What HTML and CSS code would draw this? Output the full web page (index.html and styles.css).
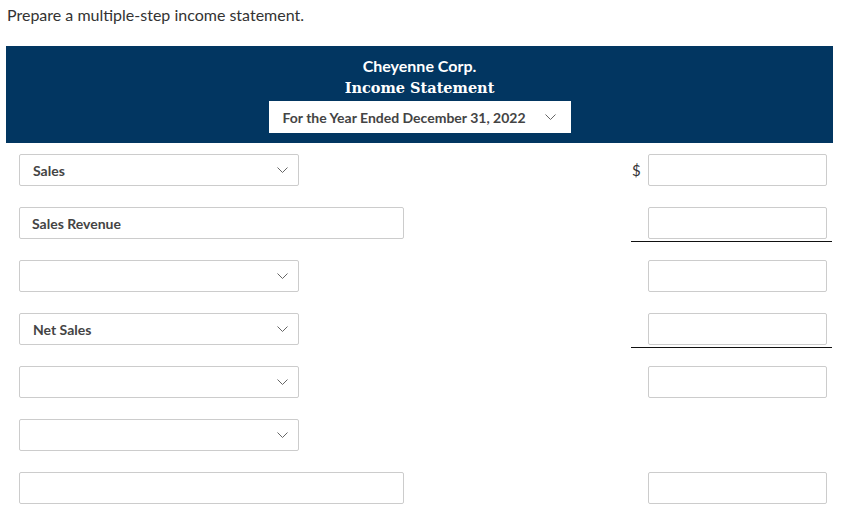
FILE: index.html
```html
<!DOCTYPE html>
<html>
<head>
<meta charset="utf-8">
<link rel="stylesheet" href="styles.css">
</head>
<body>
<p class="prompt">Prepare a multiple-step income statement.</p>
<div class="header">
  <div class="company">Cheyenne Corp.</div>
  <div class="statement">Income Statement</div>
  <div class="date-select">
    <span>For the Year Ended December 31, 2022</span>
    <svg class="chev" width="11" height="6" viewBox="0 0 11 6"><polyline points="0.5,0.5 5.5,5.5 10.5,0.5" fill="none" stroke="#666" stroke-width="1"/></svg>
  </div>
</div>
<div class="rows">
  <div class="row">
    <div class="label"><div class="select"><span>Sales</span><svg class="chev" width="11" height="6" viewBox="0 0 11 6"><polyline points="0.5,0.5 5.5,5.5 10.5,0.5" fill="none" stroke="#666" stroke-width="1"/></svg></div></div>
    <div class="amount"><span class="dollar">$</span><div class="box"></div></div>
  </div>
  <div class="row">
    <div class="label"><div class="text-input"><span>Sales Revenue</span></div></div>
    <div class="amount total"><span class="dollar"></span><div class="box"></div></div>
  </div>
  <div class="row">
    <div class="label"><div class="select"><span></span><svg class="chev" width="11" height="6" viewBox="0 0 11 6"><polyline points="0.5,0.5 5.5,5.5 10.5,0.5" fill="none" stroke="#666" stroke-width="1"/></svg></div></div>
    <div class="amount"><span class="dollar"></span><div class="box"></div></div>
  </div>
  <div class="row">
    <div class="label"><div class="select"><span>Net Sales</span><svg class="chev" width="11" height="6" viewBox="0 0 11 6"><polyline points="0.5,0.5 5.5,5.5 10.5,0.5" fill="none" stroke="#666" stroke-width="1"/></svg></div></div>
    <div class="amount total"><span class="dollar"></span><div class="box"></div></div>
  </div>
  <div class="row">
    <div class="label"><div class="select"><span></span><svg class="chev" width="11" height="6" viewBox="0 0 11 6"><polyline points="0.5,0.5 5.5,5.5 10.5,0.5" fill="none" stroke="#666" stroke-width="1"/></svg></div></div>
    <div class="amount"><span class="dollar"></span><div class="box"></div></div>
  </div>
  <div class="row">
    <div class="label"><div class="select"><span></span><svg class="chev" width="11" height="6" viewBox="0 0 11 6"><polyline points="0.5,0.5 5.5,5.5 10.5,0.5" fill="none" stroke="#666" stroke-width="1"/></svg></div></div>
  </div>
  <div class="row">
    <div class="label"><div class="text-input"><span></span></div></div>
    <div class="amount"><span class="dollar"></span><div class="box"></div></div>
  </div>
</div>
</body>
</html>
```
FILE: styles.css
```css
html, body {
  margin: 0;
  padding: 0;
  background: #fff;
}
body {
  font-family: Lato, "Open Sans", sans-serif;
  color: #333;
}
.prompt {
  margin: 0;
  padding: 4px 0 0 7px;
  font-size: 16px;
  line-height: 21px;
  color: #333;
}
.header {
  margin: 21px 8px 0 6px;
  height: 97px;
  box-sizing: border-box;
  background: #023661;
  color: #fff;
  display: flex;
  flex-direction: column;
  align-items: center;
  padding-top: 9px;
}
.company {
  font-size: 16px;
  font-weight: 700;
  line-height: 21px;
}
.statement {
  font-family: "DejaVu Serif", "Liberation Serif", serif;
  font-size: 14.5px;
  font-weight: 700;
  line-height: 24px;
}
.date-select {
  margin-top: 1px;
  width: 302px;
  height: 32px;
  box-sizing: border-box;
  background: #fff;
  color: #444;
  display: flex;
  align-items: center;
  justify-content: space-between;
  padding: 0 15px 0 14px;
  font-size: 14px;
  font-weight: 700;
}
.rows {
  margin-top: 11px;
  padding-left: 19px;
  display: flex;
  flex-direction: column;
  gap: 21px;
}
.row {
  height: 32px;
  display: flex;
  align-items: flex-start;
}
.label {
  width: 612px;
  flex: none;
}
.select, .text-input {
  height: 32px;
  box-sizing: border-box;
  border: 1px solid #ccc;
  border-radius: 2px;
  display: flex;
  align-items: center;
  color: #444;
  font-size: 14px;
  font-weight: 700;
  background: #fff;
}
.select {
  width: 280px;
  justify-content: space-between;
  padding: 0 10px 0 13px;
}
.text-input {
  width: 385px;
  padding: 0 12px;
}
.amount {
  width: 201px;
  flex: none;
  display: flex;
  align-items: center;
  padding-right: 5px;
  box-sizing: border-box;
}
.amount.total {
  padding-bottom: 2px;
  border-bottom: 1px solid #111;
}
.dollar {
  width: 17px;
  flex: none;
  font-size: 15px;
  color: #333;
  padding-left: 1px;
  box-sizing: border-box;
}
.box {
  width: 179px;
  height: 32px;
  box-sizing: border-box;
  border: 1px solid #ccc;
  border-radius: 2px;
  background: #fff;
}
.chev {
  display: block;
  flex: none;
}
```
